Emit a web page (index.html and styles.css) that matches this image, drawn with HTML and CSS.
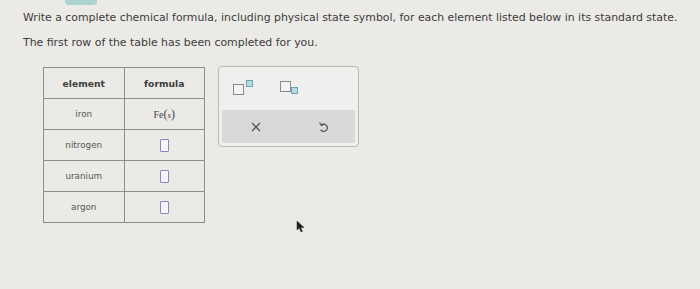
FILE: index.html
```html
<!DOCTYPE html>
<html>
<head>
<meta charset="utf-8">
<link rel="stylesheet" href="styles.css">
</head>
<body>
<div class="tab"></div>
<p class="prompt">Write a complete chemical formula, including physical state symbol, for each element listed below in its standard state.</p>
<p class="prompt second">The first row of the table has been completed for you.</p>
<div class="work">
  <table class="grid">
    <tr><th>element</th><th>formula</th></tr>
    <tr><td>iron</td><td class="formula">Fe<span class="paren">(</span><i>s</i><span class="paren">)</span></td></tr>
    <tr><td>nitrogen</td><td><span class="blank"></span></td></tr>
    <tr><td>uranium</td><td><span class="blank"></span></td></tr>
    <tr><td>argon</td><td><span class="blank"></span></td></tr>
  </table>
  <div class="panel">
    <div class="tools">
      <span class="sup-icon"><span class="big"></span><span class="small"></span></span>
      <span class="sub-icon"><span class="big"></span><span class="small"></span></span>
    </div>
    <div class="actions">
      <svg class="x" width="10" height="10" viewBox="0 0 10 10"><path d="M1 1L9 9M9 1L1 9" stroke="#555" stroke-width="1.3" fill="none"/></svg>
      <svg class="undo" width="10" height="12" viewBox="0 0 10 12"><path d="M3.2 4.2A3.6 3.6 0 1 1 2.6 8.6" stroke="#555" stroke-width="1.3" fill="none"/><path d="M1.6 1.6L3.6 4.6L6.2 2.8" stroke="#555" stroke-width="1.2" fill="none"/></svg>
    </div>
  </div>
</div>
<svg class="cursor" width="9" height="13" viewBox="0 0 9 13"><path d="M1 1L1 10L3.3 8L5 12L6.4 11.4L4.8 7.6L8 7.4Z" fill="#1b1b1b" stroke="#444" stroke-width="0.6"/></svg>
</body>
</html>
```
FILE: styles.css
```css
html, body {
  margin: 0;
  padding: 0;
}
body {
  background: #ebeae6;
  font-family: "DejaVu Sans", Verdana, sans-serif;
  color: #3b3b3b;
  width: 700px;
  height: 289px;
  position: relative;
  overflow: hidden;
}
.tab {
  width: 32px;
  height: 5px;
  margin-left: 65px;
  background: #abd4cf;
  border-radius: 0 0 4px 4px;
}
.prompt {
  margin: 0;
  padding-left: 23px;
  font-size: 10.9px;
  line-height: 14px;
  margin-top: 6px;
  white-space: nowrap;
}
.prompt.second {
  margin-top: 11px;
}
.work {
  display: flex;
  align-items: flex-start;
  margin-top: 17px;
  padding-left: 43px;
  gap: 13px;
}
.grid {
  border-collapse: collapse;
  border: 1px solid #6f6f6f;
  width: 162px;
}
.grid th, .grid td {
  border: 1px solid #8c8c8c;
  height: 30px;
  padding: 0;
  text-align: center;
  font-size: 8.8px;
  color: #555;
  width: 80px;
}
.grid th {
  font-weight: bold;
  color: #3d3d3d;
  font-size: 9.2px;
}
.grid td.formula {
  font-family: "Liberation Serif", "DejaVu Serif", serif;
  font-size: 10px;
  color: #444;
}
.grid td.formula i {
  font-size: 9px;
}
.paren {
  font-size: 12px;
}
.blank {
  display: inline-block;
  width: 7px;
  height: 11px;
  border: 1px solid #8d84c0;
  border-radius: 1px;
  vertical-align: middle;
  background: #f6f5f8;
}
.panel {
  width: 133px;
  height: 76px;
  border: 1px solid #b9b9b6;
  border-radius: 4px;
  background: #efefed;
  display: flex;
  flex-direction: column;
  padding: 0 3px 3px;
  box-sizing: content-box;
  margin-top: -1px;
}
.tools {
  height: 43px;
  display: flex;
  align-items: center;
  gap: 29px;
  padding-left: 11px;
  padding-bottom: 3px;
  box-sizing: border-box;
}
.sup-icon, .sub-icon {
  position: relative;
  display: inline-block;
  width: 18px;
  height: 14px;
}
.big {
  position: absolute;
  width: 9px;
  height: 9px;
  border: 1px solid #8a8a8a;
  background: #f3f3f1;
}
.small {
  position: absolute;
  width: 5px;
  height: 5px;
  border: 1px solid #6ea5b3;
  background: #b8dbe3;
}
.sup-icon .big { left: 0; top: 4px; }
.sup-icon .small { left: 13px; top: 0; }
.sub-icon .big { left: 0; top: 1px; }
.sub-icon .small { left: 11px; top: 7px; }
.actions {
  flex: 1;
  background: #d9d9d7;
  border-radius: 2px;
  display: flex;
  align-items: center;
  padding-left: 29px;
  gap: 57px;
}
.cursor {
  position: absolute;
  left: 296px;
  top: 220px;
}
```
